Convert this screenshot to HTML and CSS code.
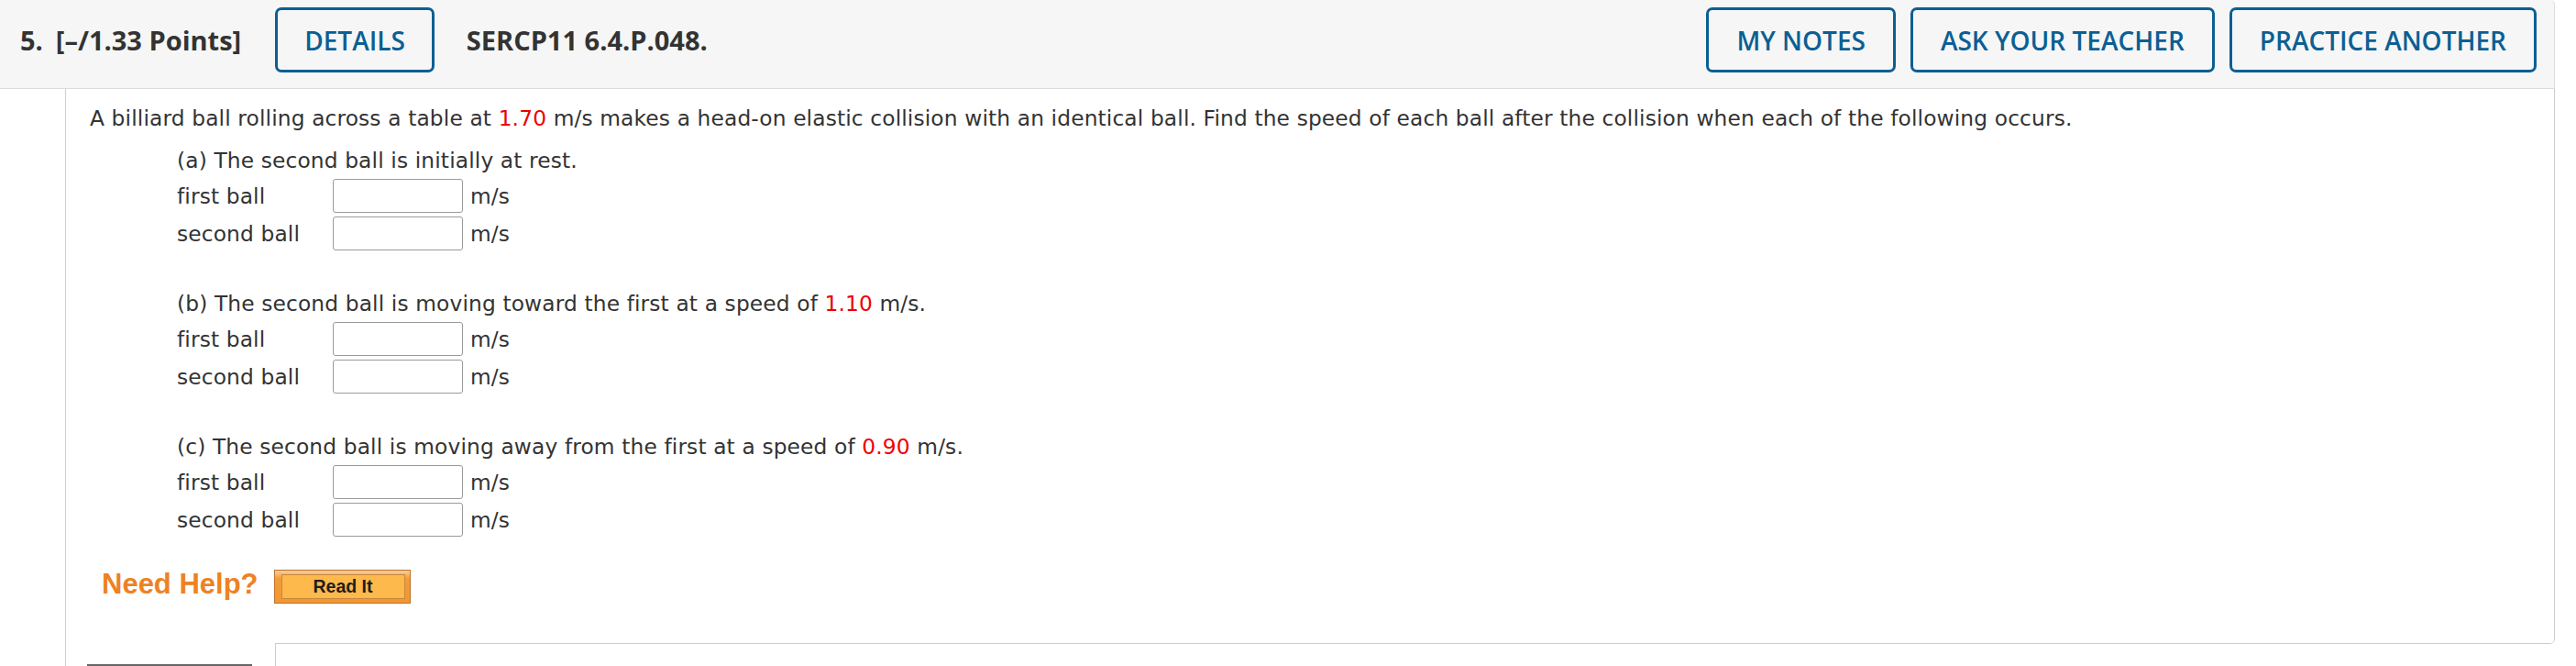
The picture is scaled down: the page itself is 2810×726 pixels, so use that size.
FILE: index.html
```html
<!DOCTYPE html>
<html lang="en">
<head>
<meta charset="utf-8">
<title>Question 5</title>
<link rel="stylesheet" href="styles.css">
</head>
<body>
<div class="page">
  <header class="qhead">
    <div class="qhead-left">
      <span class="qnum">5.</span>
      <span class="qpts">[–/1.33 Points]</span>
      <button class="hbtn details">DETAILS</button>
      <span class="qid">SERCP11 6.4.P.048.</span>
    </div>
    <div class="qhead-right">
      <button class="hbtn">MY NOTES</button>
      <button class="hbtn">ASK YOUR TEACHER</button>
      <button class="hbtn">PRACTICE ANOTHER</button>
    </div>
  </header>

  <div class="qbody">
    <div class="gutter"></div>
    <div class="main">
      <div class="card">
        <p class="intro">A billiard ball rolling across a table at <span class="num">1.70</span> m/s makes a head-on elastic collision with an identical ball. Find the speed of each ball after the collision when each of the following occurs.</p>

        <div class="part first">
          <p class="prompt">(a) The second ball is initially at rest.</p>
          <div class="row"><span class="lbl">first ball</span><input class="field" type="text"><span class="unit">m/s</span></div>
          <div class="row"><span class="lbl">second ball</span><input class="field" type="text"><span class="unit">m/s</span></div>
        </div>

        <div class="part">
          <p class="prompt">(b) The second ball is moving toward the first at a speed of <span class="num">1.10</span> m/s.</p>
          <div class="row"><span class="lbl">first ball</span><input class="field" type="text"><span class="unit">m/s</span></div>
          <div class="row"><span class="lbl">second ball</span><input class="field" type="text"><span class="unit">m/s</span></div>
        </div>

        <div class="part">
          <p class="prompt">(c) The second ball is moving away from the first at a speed of <span class="num">0.90</span> m/s.</p>
          <div class="row"><span class="lbl">first ball</span><input class="field" type="text"><span class="unit">m/s</span></div>
          <div class="row"><span class="lbl">second ball</span><input class="field" type="text"><span class="unit">m/s</span></div>
        </div>

        <div class="help">
          <span class="help-text">Need Help?</span>
          <button class="readit"><span class="readit-in">Read It</span></button>
        </div>
      </div>

      <div class="next">
        <div class="next-left"><div class="next-bar"></div></div>
        <div class="next-right"></div>
      </div>
    </div>
  </div>
</div>
</body>
</html>
```

FILE: styles.css
```css
html, body {
  margin: 0;
  padding: 0;
  background: #ffffff;
}

.page {
  width: 2810px;
  height: 726px;
  overflow: hidden;
  display: flex;
  flex-direction: column;
}

/* ---------- header ---------- */
.qhead {
  box-sizing: border-box;
  width: 2787px;
  height: 97px;
  background: #f6f6f6;
  border-bottom: 1px solid #dcdcdc;
  border-right: 1px solid #dcdcdc;
  border-top-right-radius: 5px;
  display: flex;
  align-items: center;
  justify-content: space-between;
  padding: 8px 19px 17px 22px;
  font-family: "Open Sans", "Liberation Sans", sans-serif;
  color: #333333;
}

.qhead-left,
.qhead-right {
  display: flex;
  align-items: center;
}

.qhead-right {
  gap: 16px;
}

.qnum,
.qpts,
.qid {
  font-size: 29px;
  font-weight: 700;
  white-space: nowrap;
}

.qpts {
  margin-left: 14px;
}

.qid {
  margin-left: 35px;
}

.hbtn {
  box-sizing: border-box;
  height: 71px;
  padding: 0 30px;
  background: transparent;
  border: 3px solid #0b5f93;
  border-radius: 7px;
  color: #0b5f93;
  font-family: "Open Sans", "Liberation Sans", sans-serif;
  font-size: 28px;
  font-weight: 600;
  white-space: nowrap;
  cursor: pointer;
}

.details {
  margin-left: 37px;
  padding: 0 29px;
}

/* ---------- body ---------- */
.qbody {
  flex: 1;
  display: flex;
  font-family: "DejaVu Sans", Verdana, sans-serif;
  font-size: 23.3px;
  letter-spacing: 0.14px;
  line-height: 28px;
  color: #333333;
}

.gutter {
  width: 71px;
  flex: none;
  border-right: 1px solid #d0d0d0;
}

.main {
  width: 2715px;
  display: flex;
  flex-direction: column;
}

.card {
  box-sizing: border-box;
  height: 605px;
  padding: 18px 0 0 26px;
  border-right: 1px solid #cccccc;
  border-bottom-right-radius: 6px;
  background: linear-gradient(#cccccc, #cccccc) right bottom / calc(100% - 228px) 1px no-repeat;
}

.intro {
  margin: 0;
  white-space: nowrap;
}

.num {
  color: #ee0000;
}

.part {
  margin: 44px 0 0 95px;
}

.part.first {
  margin-top: 18px;
}

.prompt {
  margin: 0 0 6px 0;
  white-space: nowrap;
}

.row {
  display: flex;
  align-items: center;
  height: 37px;
  margin-bottom: 4px;
}

.lbl {
  width: 170px;
  flex: none;
}

.field {
  box-sizing: border-box;
  width: 142px;
  height: 37px;
  margin: 0;
  padding: 0 4px;
  border: 1px solid #9a9a9a;
  border-radius: 3px;
  background: #ffffff;
  font: inherit;
}

.unit {
  margin-left: 8px;
}

/* ---------- need help ---------- */
.help {
  display: flex;
  align-items: center;
  margin: 36px 0 0 13px;
}

.help-text {
  font-family: "Liberation Sans", Arial, sans-serif;
  font-weight: 700;
  font-size: 31px;
  line-height: 31px;
  letter-spacing: 0;
  color: #ee8222;
  margin: 0 17px 6px 0;
  white-space: nowrap;
}

.readit {
  box-sizing: border-box;
  width: 149px;
  height: 37px;
  padding: 4px 5px 4px 7px;
  margin: 0;
  border: 1px solid #bd722c;
  background: linear-gradient(#f8cf9f 0, #f39c3a 25%, #f19633 100%);
  display: flex;
  cursor: pointer;
}

.readit-in {
  flex: 1;
  display: flex;
  align-items: center;
  justify-content: center;
  border: 1px solid #c6883c;
  background: #fdb94c;
  font-family: "Liberation Sans", Arial, sans-serif;
  font-weight: 700;
  font-size: 19.5px;
  color: #1e1e1e;
}

/* ---------- next question stub ---------- */
.next {
  flex: 1;
  display: flex;
}

.next-left {
  width: 228px;
  flex: none;
  padding: 22px 0 0 23px;
  box-sizing: border-box;
}

.next-bar {
  width: 180px;
  height: 2px;
  background: #666666;
}

.next-right {
  flex: 1;
  border-left: 1px solid #cccccc;
}
```
